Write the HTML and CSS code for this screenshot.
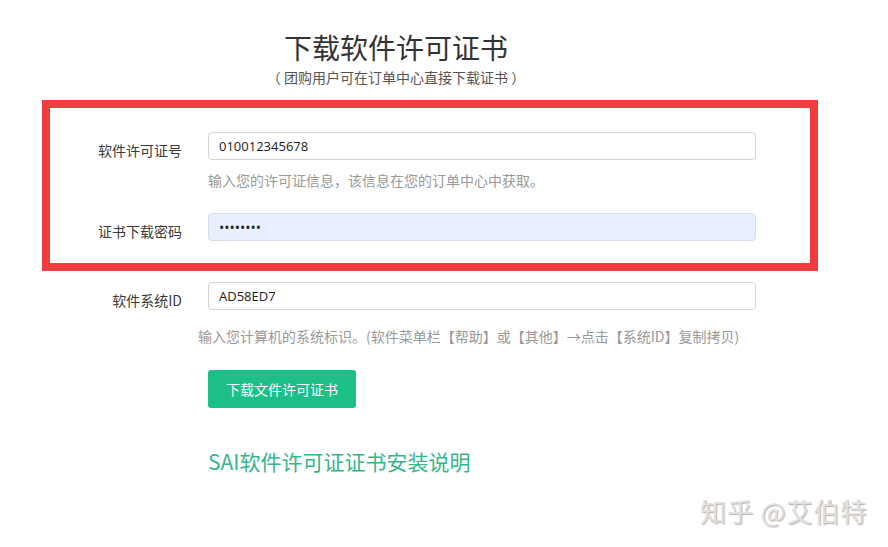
FILE: index.html
```html
<!DOCTYPE html>
<html lang="zh-CN">
<head>
<meta charset="utf-8">
<title>下载软件许可证书</title>
<link rel="stylesheet" href="styles.css">
</head>
<body>
<div class="page">
  <header class="head">
    <h1 class="title">下载软件许可证书</h1>
    <p class="subtitle">（ 团购用户可在订单中心直接下载证书 ）</p>
  </header>

  <section class="marked">
    <div class="row">
      <label class="label">软件许可证号</label>
      <div class="field">
        <input class="input" type="text" value="010012345678">
        <p class="hint">输入您的许可证信息，该信息在您的订单中心中获取。</p>
      </div>
    </div>
    <div class="row row-pw">
      <label class="label">证书下载密码</label>
      <div class="field">
        <input class="input input-fill" type="password" value="12345678">
      </div>
    </div>
  </section>

  <div class="row row-id">
    <label class="label">软件系统ID</label>
    <div class="field">
      <input class="input" type="text" value="AD58ED7">
    </div>
  </div>
  <p class="hint hint-wide">输入您计算机的系统标识。(软件菜单栏【帮助】或【其他】→点击【系统ID】复制拷贝)</p>

  <div class="actions">
    <button class="btn" type="button">下载文件许可证书</button>
    <a class="guide" href="#">SAI软件许可证证书安装说明</a>
  </div>

  <div class="watermark">知乎 @艾伯特</div>
</div>
</body>
</html>
```

FILE: styles.css
```css
* { box-sizing: border-box; }

html, body {
  margin: 0;
  padding: 0;
  background: #fff;
}

body {
  font-family: "Noto Sans CJK SC", "Noto Sans", "Liberation Sans", sans-serif;
  color: #333;
  width: 888px;
  height: 547px;
  overflow: hidden;
}

.page {
  position: relative;
  width: 888px;
  height: 547px;
}

.head {
  width: 792px;
  text-align: center;
  padding-top: 27px;
}

.title {
  margin: 0;
  font-size: 28px;
  line-height: 40px;
  font-weight: normal;
  color: #333;
}

.subtitle {
  margin: 0;
  font-size: 14px;
  line-height: 21px;
  color: #555;
}

.marked {
  margin: 12px 0 0 42px;
  width: 776px;
  border: 8px solid #f03d3f;
  padding: 24px 0 22px 0;
}

.row {
  display: flex;
  align-items: flex-start;
  gap: 26px;
}

.label {
  width: 132px;
  height: 28px;
  flex: none;
  text-align: right;
  font-size: 14px;
  line-height: 36px;
  color: #3a3a3a;
}

.field {
  width: 548px;
}

.input {
  display: block;
  width: 548px;
  height: 28px;
  margin: 0;
  border: 1px solid #d4d4d4;
  border-radius: 4px;
  padding: 0 10px;
  font-family: "Open Sans", "Noto Sans", "Liberation Sans", sans-serif;
  font-size: 13px;
  color: #222;
  background: #fff;
  outline: none;
}

.input-fill {
  background: #e8f0fe;
  border-color: #d6dde8;
  font-size: 14px;
}

.hint {
  margin: 10px 0 0 0;
  font-size: 14px;
  line-height: 20px;
  color: #999;
}

.row-pw {
  margin-top: 23px;
}

.row-id {
  margin-top: 11px;
  padding-left: 50px;
}

.hint-wide {
  margin: 16px 0 0 198px;
}

.actions {
  display: flex;
  flex-direction: column;
  align-items: flex-start;
  padding-left: 208px;
  margin-top: 24px;
}

.btn {
  width: 148px;
  height: 38px;
  border: none;
  border-radius: 3px;
  background: #1cbf86;
  color: #fff;
  font-family: "Noto Sans CJK SC", "Noto Sans", sans-serif;
  font-size: 14px;
  padding: 0;
  cursor: pointer;
}

.guide {
  margin-top: 39px;
  font-size: 21px;
  line-height: 28px;
  color: #34b68b;
  text-decoration: none;
}

.watermark {
  position: absolute;
  left: 700px;
  top: 495px;
  font-size: 26px;
  line-height: 32px;
  letter-spacing: 1px;
  color: #e0e0e0;
  text-shadow: 1px 1px 1px #b4b4b4;
  white-space: nowrap;
}
```
